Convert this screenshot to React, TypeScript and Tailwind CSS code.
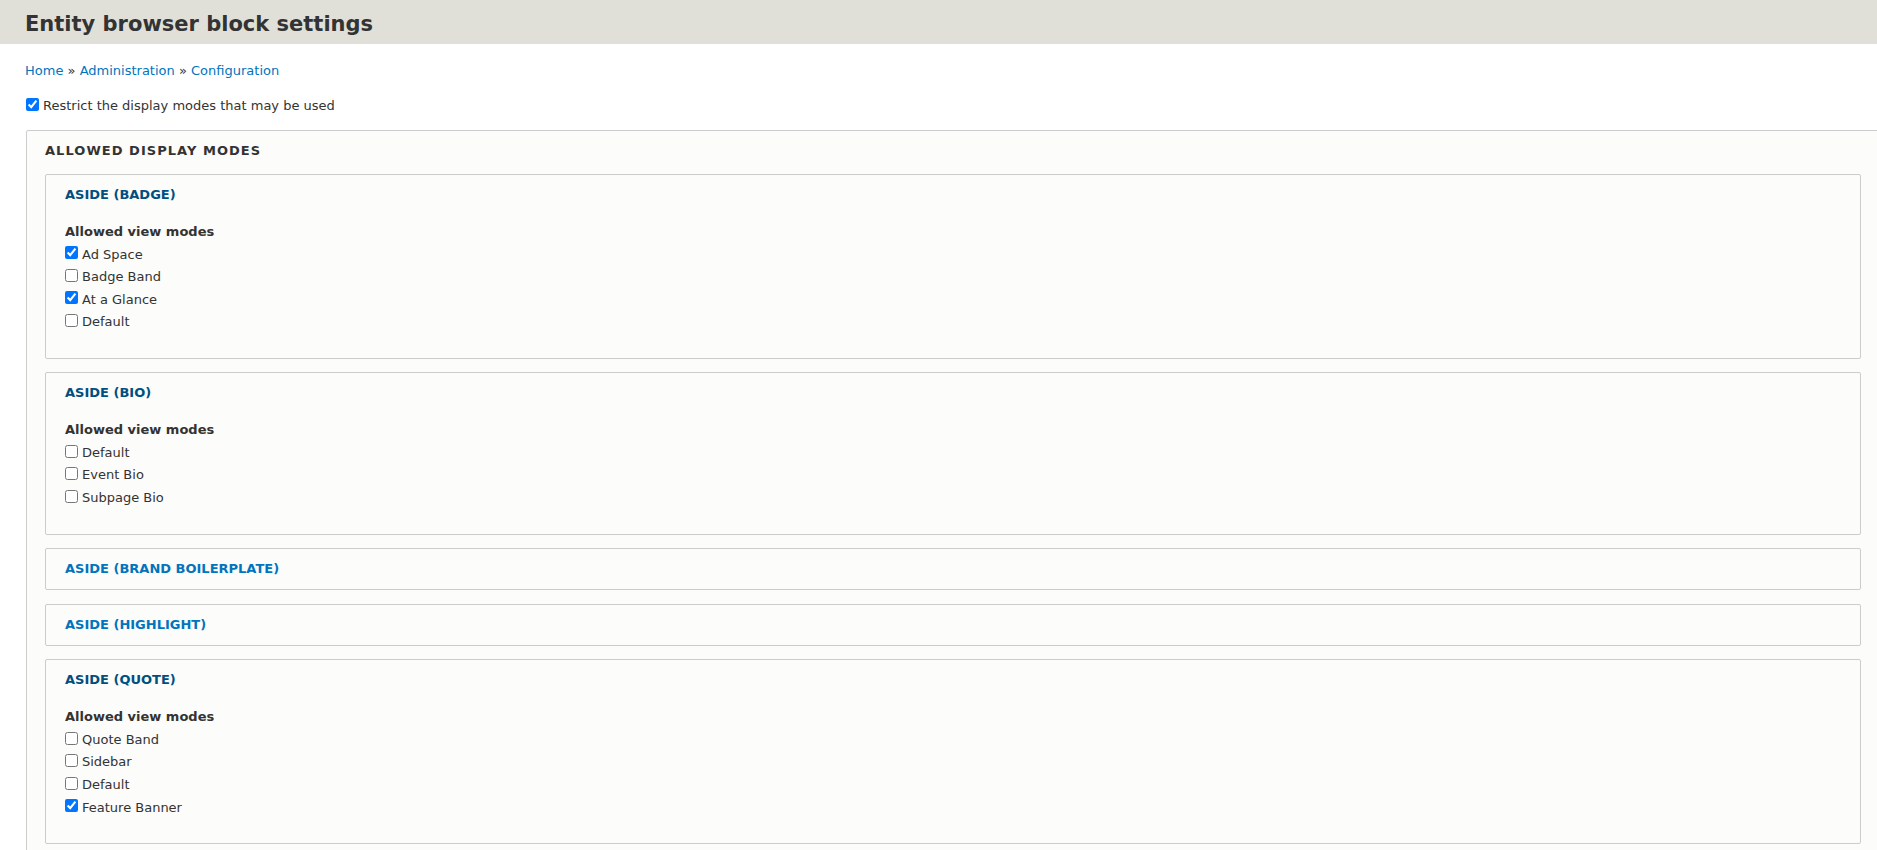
import React, { useState } from 'react';

type Mode = { label: string; checked: boolean };

interface Section {
  title: string;
  open: boolean;
  modes: Mode[];
}

const sections: Section[] = [
  {
    title: 'Aside (Badge)',
    open: true,
    modes: [
      { label: 'Ad Space', checked: true },
      { label: 'Badge Band', checked: false },
      { label: 'At a Glance', checked: true },
      { label: 'Default', checked: false },
    ],
  },
  {
    title: 'Aside (Bio)',
    open: true,
    modes: [
      { label: 'Default', checked: false },
      { label: 'Event Bio', checked: false },
      { label: 'Subpage Bio', checked: false },
    ],
  },
  { title: 'Aside (Brand Boilerplate)', open: false, modes: [] },
  { title: 'Aside (Highlight)', open: false, modes: [] },
  {
    title: 'Aside (Quote)',
    open: true,
    modes: [
      { label: 'Quote Band', checked: false },
      { label: 'Sidebar', checked: false },
      { label: 'Default', checked: false },
      { label: 'Feature Banner', checked: true },
    ],
  },
];

const DisplaySection: React.FC<{ section: Section }> = ({ section }) => {
  const [open, setOpen] = useState(section.open);

  return (
    <div className="rounded-[2px] border border-[#cccccc] bg-[#fcfcfa]">
      {/* Summary */}
      <div
        className={`flex cursor-pointer items-center px-[19px] font-bold uppercase leading-[20px] ${
          open ? 'h-[40px] text-[#004f80]' : 'h-[40.5px] text-[#0074bd]'
        }`}
        onClick={() => setOpen(!open)}
        role="button"
        tabIndex={0}
      >
        {section.title}
      </div>

      {open && (
        <div className="px-[19px] pb-[24.6px]">
          <div className="mt-[7px] font-bold leading-[20px]">
            Allowed view modes
          </div>
          <div className="flex flex-col pt-[1px]">
            {section.modes.map((mode) => (
              <label
                key={mode.label}
                className="flex h-[22.6px] items-center gap-[4px]"
              >
                <input
                  type="checkbox"
                  defaultChecked={mode.checked}
                  className="mb-[3px] h-[13px] w-[13px]"
                />
                <span>{mode.label}</span>
              </label>
            ))}
          </div>
        </div>
      )}
    </div>
  );
};

export default function App() {
  return (
    <div className="min-h-screen overflow-hidden bg-white font-['DejaVu_Sans',sans-serif] text-[13px] text-[#333333]">
      {/* Page header */}
      <div className="h-[44px] bg-[#e0e0d8] pl-[25px] pt-[14px]">
        <h1 className="text-[21px] font-bold leading-[21px] text-[#333333]">
          Entity browser block settings
        </h1>
      </div>

      <div className="pl-[26px]">
        {/* Breadcrumb */}
        <nav className="-ml-[1px] mt-[17px] leading-[20px]">
          <a href="#" className="text-[#0074bd]">
            Home
          </a>{' '}
          »{' '}
          <a href="#" className="text-[#0074bd]">
            Administration
          </a>{' '}
          »{' '}
          <a href="#" className="text-[#0074bd]">
            Configuration
          </a>
        </nav>

        <label className="mt-[15px] flex h-[20px] items-center gap-[4px]">
          <input
            type="checkbox"
            defaultChecked
            className="mb-[3px] h-[13px] w-[13px]"
          />
          <span>Restrict the display modes that may be used</span>
        </label>

        {/* Allowed display modes */}
        <div className="mt-[14px] w-[1854px] rounded-[2px] border border-[#cccccc] bg-[#fcfcfa] px-[18px] pb-[20px] pt-[10px]">
          <div className="font-bold uppercase leading-[20px] tracking-[0.08em] text-[#333333]">
            Allowed display modes
          </div>
          <div className="mt-[13px] flex flex-col gap-[13.25px]">
            {sections.map((section) => (
              <DisplaySection key={section.title} section={section} />
            ))}
          </div>
        </div>
      </div>
    </div>
  );
}
